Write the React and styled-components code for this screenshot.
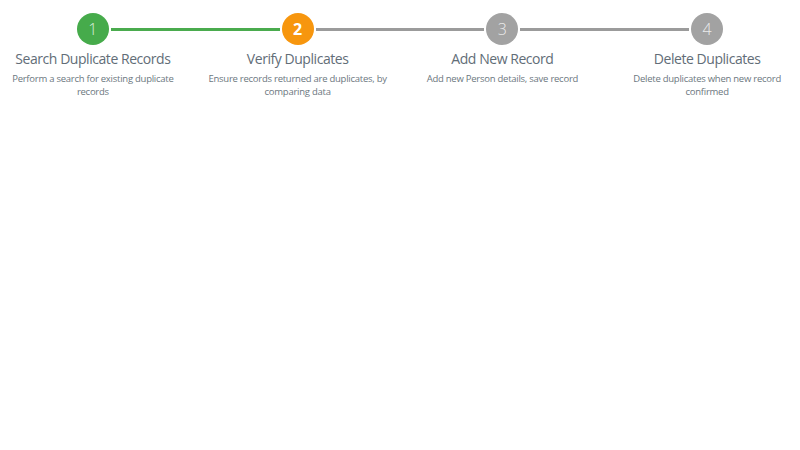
import React from "react";
import styled, { createGlobalStyle } from "styled-components";

const Global = createGlobalStyle`
  html, body { margin: 0; padding: 0; background: #ffffff; }
  body { font-family: "Open Sans", "Liberation Sans", sans-serif; overflow: hidden; }
`;

const Page = styled.div`
  width: 800px;
  height: 450px;
  overflow: hidden;
`;

const Steps = styled.div`
  display: grid;
  grid-template-columns: repeat(4, 1fr);
  width: 819px;
  margin-left: -9.5px;
  padding-top: 13px;
`;

const Step = styled.div`
  display: flex;
  flex-direction: column;
  align-items: center;
`;

const Track = styled.div`
  display: flex;
  align-items: center;
  align-self: stretch;
  gap: 2px;
`;

const Line = styled.div`
  flex: 1;
  height: 3px;
  background: ${(p) => (p.$hidden ? "transparent" : p.$done ? "#4aab4e" : "#9b9b9b")};
`;

const COLORS = { done: "#46ab4b", active: "#f7960e", todo: "#a2a2a2" };

const Circle = styled.div`
  width: 32px;
  height: 32px;
  border-radius: 50%;
  background: ${(p) => COLORS[p.$state]};
  color: ${(p) => (p.$state === "active" ? "#ffffff" : "rgba(255,255,255,0.8)")};
  font-weight: ${(p) => (p.$state === "active" ? 700 : 300)};
  font-size: 16px;
  display: flex;
  align-items: center;
  justify-content: center;
  flex: none;
`;

const Title = styled.div`
  margin-top: 4px;
  font-size: 14px;
  font-weight: 400;
  letter-spacing: -0.45px;
  line-height: 20px;
  color: #626d77;
  text-align: center;
`;

const Desc = styled.div`
  margin-top: 3px;
  font-size: 9.5px;
  font-weight: 400;
  letter-spacing: -0.25px;
  line-height: 13px;
  color: #6c7780;
  text-align: center;
  max-width: 186px;
`;

const steps = [
  { n: 1, title: "Search Duplicate Records", desc: "Perform a search for existing duplicate records", state: "done" },
  { n: 2, title: "Verify Duplicates", desc: "Ensure records returned are duplicates, by comparing data", state: "active" },
  { n: 3, title: "Add New Record", desc: "Add new Person details, save record", state: "todo" },
  { n: 4, title: "Delete Duplicates", desc: "Delete duplicates when new record confirmed", state: "todo" },
];

export default function App() {
  return (
    <Page>
      <Global />
      <Steps>
        {steps.map((s, i) => (
          <Step key={s.n}>
            <Track>
              <Line $hidden={i === 0} $done={s.state !== "todo"} />
              <Circle $state={s.state}>{s.n}</Circle>
              <Line $hidden={i === steps.length - 1} $done={s.state === "done"} />
            </Track>
            <Title>{s.title}</Title>
            <Desc>{s.desc}</Desc>
          </Step>
        ))}
      </Steps>
    </Page>
  );
}
